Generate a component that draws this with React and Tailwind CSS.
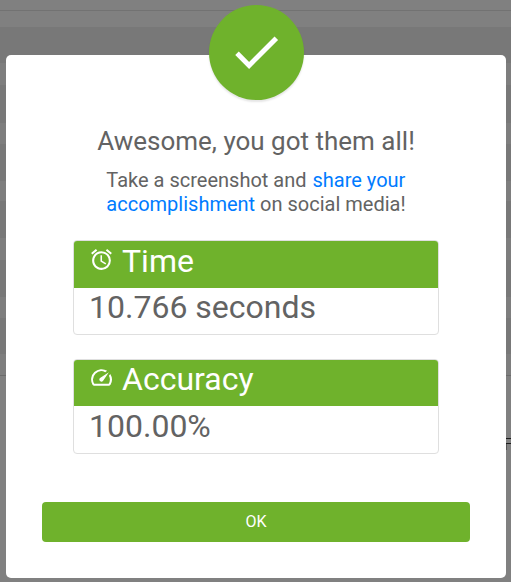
import { MdAccessAlarm, MdSpeed } from "react-icons/md";

function Backdrop() {
  return (
    <div className="absolute inset-0 flex flex-col bg-[#808080]">
      <div className="h-[10px]" />
      <div className="h-px bg-[#727272]" />
      <div className="h-4" />
      <div className="h-[36px] bg-[#787878]" />
      <div className="h-[22px] bg-[#7e7e7e]" />
      <div className="h-[38px] bg-[#787878]" />
      <div className="h-[21px] bg-[#7e7e7e]" />
      <div className="h-[37px] bg-[#787878]" />
      <div className="h-[20px] bg-[#7e7e7e]" />
      <div className="h-[37px] bg-[#787878]" />
      <div className="h-[22px] bg-[#7e7e7e]" />
      <div className="h-[37px] bg-[#787878]" />
      <div className="h-[21px] bg-[#7e7e7e]" />
      <div className="h-[36px] bg-[#787878]" />
      <div className="h-[21px] bg-[#7e7e7e]" />
      <div className="h-px bg-[#6b6b6b]" />
      <div className="mt-[62px] ml-auto h-[6px] w-[5px] border-y border-[#1c1c1c]" />
      <div className="ml-[506px] h-[6px] w-px bg-[#555555]" />
    </div>
  );
}

function StatCard({ icon: Icon, title, value, headerClass, iconClass, valueClass }) {
  return (
    <div className="mt-[24px] flex h-[95px] w-[366px] flex-col overflow-hidden rounded-[4px] border border-[#dfdfdf] text-[32px]">
      <div
        className={`flex items-start bg-[#6fb22c] pl-[15px] text-white ${headerClass}`}
      >
        <Icon className={`h-[25px] w-[25px] ${iconClass}`} />
        <span className="ml-2">{title}</span>
      </div>
      <div className={`pl-[15px] ${valueClass}`}>{value}</div>
    </div>
  );
}

function App() {
  return (
    <div className="relative h-[582px] w-[511px] overflow-hidden font-['Roboto',sans-serif] text-[#636363]">
      <Backdrop />
      <div className="relative pt-[55px] pl-[6px]">
        <div className="relative flex h-[523px] w-[500px] flex-col items-center rounded-[5px] bg-white">
          {/* Success badge */}
          <div className="absolute -top-[50px] left-[203px] h-[95px] w-[95px] rounded-full bg-[#6fb22c] shadow-[0_2px_2px_rgba(0,0,0,0.1)]">
            <svg
              className="h-[95px] w-[95px] text-white"
              fill="none"
              stroke="currentColor"
              viewBox="0 0 95 95"
            >
              <path strokeWidth={5} d="M28 48.3L40.1 60.4L67.3 33.2" />
            </svg>
          </div>

          <h1 className="mt-[70px] text-[26px] leading-[32px] whitespace-nowrap">
            Awesome, you got them all!
          </h1>
          <p className="mt-[11px] text-[20px] leading-[24px] whitespace-nowrap">
            Take a screenshot and <a className="ml-px text-[#007bff]">share your</a>
            <br />
            <a className="text-[#007bff]">accomplishment</a> on social media!
          </p>

          <StatCard
            icon={MdAccessAlarm}
            title="Time"
            value="10.766 seconds"
            headerClass="h-[47px] leading-[40px]"
            iconClass="mt-[6px]"
            valueClass="leading-[38px]"
          />
          <StatCard
            icon={MdSpeed}
            title="Accuracy"
            value="100.00%"
            headerClass="h-[46px] leading-[38px]"
            iconClass="mt-[5px]"
            valueClass="leading-[40px]"
          />

          <button className="mt-[48px] h-[40px] w-[428px] rounded-[4px] bg-[#6fb22c] text-[16px] text-white">
            OK
          </button>
        </div>
      </div>
    </div>
  );
}

export default App;
